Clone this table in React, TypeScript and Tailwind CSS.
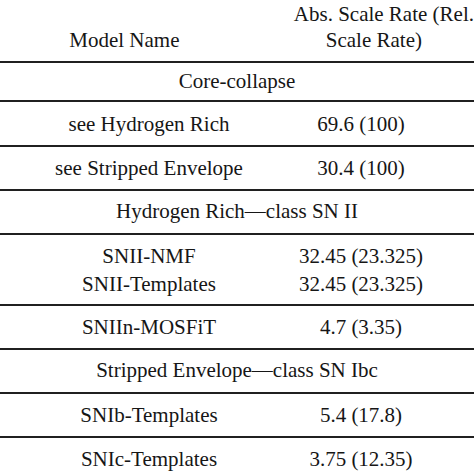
type Row =
  | { kind: "group"; label: string; h: string }
  | { kind: "data"; names: string[]; rates: string[]; h: string };

const ROWS: Row[] = [
  { kind: "group", label: "Core-collapse", h: "h-[37px]" },
  { kind: "data", names: ["see Hydrogen Rich"], rates: ["69.6 (100)"], h: "h-[43px]" },
  { kind: "data", names: ["see Stripped Envelope"], rates: ["30.4 (100)"], h: "h-[42px]" },
  { kind: "group", label: "Hydrogen Rich\u2014class SN II", h: "h-[42px]" },
  {
    kind: "data",
    names: ["SNII-NMF", "SNII-Templates"],
    rates: ["32.45 (23.325)", "32.45 (23.325)"],
    h: "h-[69px]",
  },
  { kind: "data", names: ["SNIIn-MOSFiT"], rates: ["4.7 (3.35)"], h: "h-[42px]" },
  { kind: "group", label: "Stripped Envelope\u2014class SN Ibc", h: "h-[42px]" },
  { kind: "data", names: ["SNIb-Templates"], rates: ["5.4 (17.8)"], h: "h-[42px]" },
  { kind: "data", names: ["SNIc-Templates"], rates: ["3.75 (12.35)"], h: "h-[42px]" },
];

// Times metrics via Liberation Serif, set on each text node
const TXT =
  "[font-family:'Liberation_Serif','Times_New_Roman',serif] text-[21px] text-[#161616]";

function Rule() {
  return <div className="h-[2px] w-full bg-[#202020]" />;
}

export default function App() {
  return (
    <div className="w-[474px] h-[474px] overflow-hidden bg-white [font-family:'Liberation_Serif','Times_New_Roman',serif]">
      {/* Header */}
      <div className="flex h-[61px] items-end pb-[8px] leading-[26px]">
        <div className={`w-[298px] text-center whitespace-nowrap ${TXT}`}>Model Name</div>
        <div className="flex flex-col whitespace-nowrap">
          <span className={`pl-[45px] ${TXT}`}>Abs. Scale Rate (Rel.</span>
          <span className={`pl-[77px] ${TXT}`}>Scale Rate)</span>
        </div>
      </div>

      {ROWS.map((row, i) => (
        <div key={i}>
          <Rule />
          {row.kind === "group" ? (
            <div className={`${row.h} flex items-center justify-center whitespace-nowrap ${TXT}`}>
              {row.label}
            </div>
          ) : (
            <div className={`${row.h} flex items-center leading-[28px]`}>
              <div className="w-[298px] flex flex-col items-center whitespace-nowrap">
                {row.names.map((n) => (
                  <span key={n} className={TXT}>
                    {n}
                  </span>
                ))}
              </div>
              <div className="w-[126px] flex flex-col items-center whitespace-nowrap">
                {row.rates.map((r, j) => (
                  <span key={j} className={TXT}>
                    {r}
                  </span>
                ))}
              </div>
            </div>
          )}
        </div>
      ))}
    </div>
  );
}
